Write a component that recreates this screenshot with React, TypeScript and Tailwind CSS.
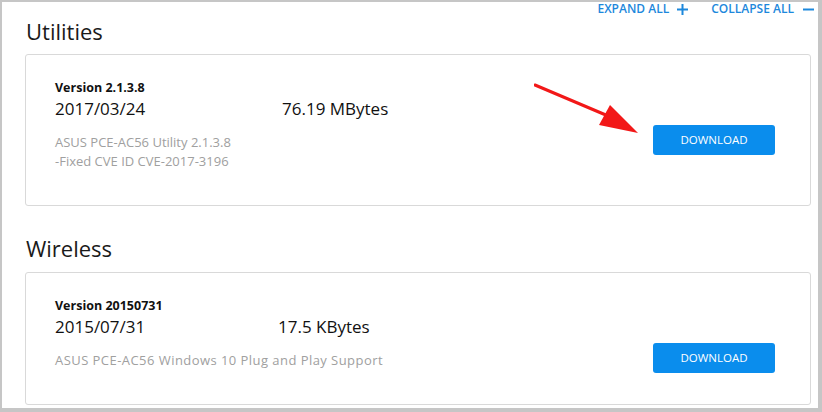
import React from 'react';

type Item = {
  version: string;
  date: string;
  size: string;
  sizeLeft: string;
  notes: string[];
  notesClass: string;
  height: string;
  arrow?: boolean;
};

const sections: { title: string; item: Item }[] = [
  {
    title: 'Utilities',
    item: {
      version: 'Version 2.1.3.8',
      date: '2017/03/24',
      size: '76.19 MBytes',
      sizeLeft: 'w-[227px]',
      notes: ['ASUS PCE-AC56 Utility 2.1.3.8', '-Fixed CVE ID CVE-2017-3196'],
      notesClass: '',
      height: 'h-[152px]',
      arrow: true,
    },
  },
  {
    title: 'Wireless',
    item: {
      version: 'Version 20150731',
      date: '2015/07/31',
      size: '17.5 KBytes',
      sizeLeft: 'w-[223px]',
      notes: ['ASUS PCE-AC56 Windows 10 Plug and Play Support'],
      notesClass: 'tracking-[0.45px]',
      height: 'h-[133px]',
    },
  },
];

function Arrow() {
  return (
    <svg className="absolute left-[508px] top-[28px]" width="114" height="54" viewBox="0 0 114 54">
      <line x1="1" y1="2" x2="86" y2="38" stroke="#f21818" strokeWidth="3" strokeLinecap="round" />
      <polygon points="76,22 65,42 104,50" fill="#f21818" />
    </svg>
  );
}

function DriverCard({ item }: { item: Item }) {
  return (
    <div className={`relative mr-[7px] ml-[23px] rounded-[3px] border border-[#d9d9d9] bg-white ${item.height}`}>
      {item.arrow && <Arrow />}
      <div className="flex">
        <div className="pl-[29px] pt-[22px]">
          <div className="text-[12.5px] font-bold leading-[21px] text-[#111]">{item.version}</div>
          <div className="flex text-[17px] leading-[22px] text-[#111]">
            <div className={item.sizeLeft}>{item.date}</div>
            <div>{item.size}</div>
          </div>
          <div className={`mt-[13px] text-[13px] leading-[19px] text-[#a0a0a0] ${item.notesClass}`}>
            {item.notes.map((n) => (
              <div key={n}>{n}</div>
            ))}
          </div>
        </div>
        <div className="ml-auto mr-[35px] pt-[70px]">
          <button className="h-[30px] w-[122px] rounded-[3px] bg-[#0a8ded] text-[11.5px] text-white">
            DOWNLOAD
          </button>
        </div>
      </div>
    </div>
  );
}

export default function App() {
  return (
    <div
      className="h-[412px] w-[822px] bg-[#c6c6c6] pt-[2px] pr-[4px] pb-[4px] pl-[2px]"
      style={{ fontFamily: '"Open Sans", "Liberation Sans", sans-serif' }}
    >
      <div className="h-full bg-white">
        <div className="flex h-[14px] justify-end gap-[23px] pr-[4px] text-[12px] font-semibold leading-[14px] text-[#1d88dc]">
          <span className="flex items-center gap-[8px]">
            EXPAND ALL
            <svg width="11" height="11" viewBox="0 0 11 11">
              <path d="M5.5 0v11M0 5.5h11" stroke="#1d88dc" strokeWidth="2" />
            </svg>
          </span>
          <span className="flex items-center gap-[9px]">
            COLLAPSE ALL
            <svg width="11" height="11" viewBox="0 0 11 11">
              <path d="M0 5.5h11" stroke="#1d88dc" strokeWidth="2" />
            </svg>
          </span>
        </div>
        {sections.map((s, i) => (
          <div key={s.title}>
            <div className={`pl-[24px] text-[22px] leading-[28px] text-[#1a1a1a] ${i === 0 ? 'h-[38px] pt-[1px]' : 'h-[66px] pt-[28px]'}`}>
              {s.title}
            </div>
            <DriverCard item={s.item} />
          </div>
        ))}
      </div>
    </div>
  );
}
